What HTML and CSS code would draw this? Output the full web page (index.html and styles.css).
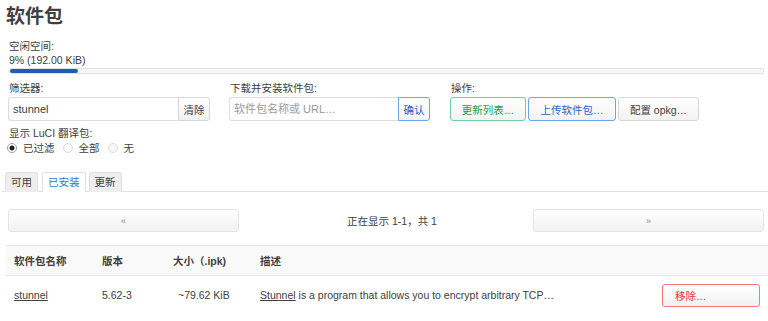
FILE: index.html
```html
<!DOCTYPE html>
<html lang="zh-cn">
<head>
    <meta charset="UTF-8">
    <title>软件包</title>
    <link rel="stylesheet" href="styles.css">
</head>
<body>
    <h2 class="titulo">软件包</h2>
    <div class="espaco">
        <div class="rotulo">空闲空间:</div>
        <div class="valor">9% (192.00 KiB)</div>
        <div class="barra"><div class="cheio" style="width: 9%"></div></div>
    </div>

    <div class="controles">
        <div class="grupo filtro">
            <div class="rotulo">筛选器:</div>
            <div class="campo">
                <input type="text" value="stunnel">
                <button class="btn">清除</button>
            </div>
        </div>
        <div class="grupo baixar">
            <div class="rotulo">下载并安装软件包:</div>
            <div class="campo">
                <input type="text" placeholder="软件包名称或 URL…">
                <button class="btn azul">确认</button>
            </div>
        </div>
        <div class="grupo acoes">
            <div class="rotulo">操作:</div>
            <div class="botoes">
                <button class="btn verde">更新列表…</button>
                <button class="btn azul">上传软件包…</button>
                <button class="btn">配置 opkg…</button>
            </div>
        </div>
    </div>

    <div class="traducao">
        <div class="rotulo">显示 LuCI 翻译包:</div>
        <div class="radios">
            <label><span class="radio marcado"></span>已过滤</label>
            <label><span class="radio"></span>全部</label>
            <label><span class="radio"></span>无</label>
        </div>
    </div>

    <ul class="abas">
        <li>可用</li>
        <li class="ativa">已安装</li>
        <li>更新</li>
    </ul>

    <div class="paginas">
        <button class="btn pag">«</button>
        <div class="info">正在显示 1-1，共 1</div>
        <button class="btn pag">»</button>
    </div>

    <table class="pacotes">
        <tr class="cabeca">
            <th class="c-nome">软件包名称</th>
            <th class="c-versao">版本</th>
            <th class="c-tam">大小（.ipk)</th>
            <th>描述</th>
            <th class="c-acao"></th>
        </tr>
        <tr>
            <td><a href="#">stunnel</a></td>
            <td>5.62-3</td>
            <td class="tam">~79.62 KiB</td>
            <td><a href="#">Stunnel</a> is a program that allows you to encrypt arbitrary TCP…</td>
            <td class="c-acao"><button class="btn vermelho">移除…</button></td>
        </tr>
    </table>
</body>
</html>
```

FILE: styles.css
```css
body
{
    margin: 0;
    padding: 0 4px 0 8px;
    font-family: "Liberation Sans", "Noto Sans CJK SC", sans-serif;
    font-size: 10.5px;
    color: #404040;
    background: #fff;
}
.titulo
{
    margin: 3px 0 0 -2px;
    font-size: 19px;
    line-height: 28px;
    font-weight: bold;
    color: #404040;
}
.espaco
{
    margin-top: 8px;
    padding-left: 1px;
}
.rotulo,
.valor
{
    line-height: 14px;
    white-space: nowrap;
}
.barra
{
    margin-top: 1px;
    height: 4px;
    border: 1px solid #e2e2e2;
    border-radius: 2px;
    background: #f7f7f7;
}
.cheio
{
    height: 4px;
    background: #1f5cb8;
    border-radius: 2px;
}
.controles
{
    display: flex;
    margin-top: 7px;
}
.grupo .rotulo
{
    padding-left: 1px;
    margin-bottom: 2px;
}
.filtro,
.baixar
{
    width: 221px;
}
.campo
{
    display: flex;
    height: 24px;
}
.campo input
{
    box-sizing: border-box;
    height: 24px;
    border: 1px solid #ddd;
    border-right: none;
    border-radius: 3px 0 0 3px;
    padding: 0 4px;
    font: inherit;
    font-size: 11px;
    color: #404040;
    outline: none;
}
.filtro input
{
    width: 170px;
}
.baixar input
{
    width: 169px;
}
.campo input::placeholder
{
    color: #999;
}
.btn
{
    box-sizing: border-box;
    height: 24px;
    border: 1px solid #d6d6d6;
    border-radius: 3px;
    background: linear-gradient(#fff, #f2f2f2);
    font: inherit;
    color: #404040;
    padding: 0;
    white-space: nowrap;
}
.campo .btn
{
    width: 32px;
    border-radius: 0 3px 3px 0;
}
.btn.azul
{
    border-color: #6aa6ec;
    color: #1f66c5;
}
.btn.verde
{
    border-color: #6fd09a;
    color: #1c9e53;
}
.btn.vermelho
{
    border-color: #f47a72;
    color: #e0392e;
}
.botoes
{
    display: flex;
    gap: 2px;
}
.botoes .btn:nth-child(1)
{
    width: 76px;
}
.botoes .btn:nth-child(2)
{
    width: 88px;
}
.botoes .btn:nth-child(3)
{
    width: 81px;
}
.traducao
{
    margin-top: 5px;
    padding-left: 1px;
}
.radios
{
    display: flex;
    gap: 8px;
    line-height: 16px;
    margin-left: -2px;
}
.radios label
{
    display: flex;
    align-items: center;
}
.radio
{
    box-sizing: border-box;
    width: 10px;
    height: 10px;
    margin-right: 6px;
    border: 1px solid #dcdcdc;
    border-radius: 50%;
    background: #f8f8f8;
}
.radio.marcado
{
    border: 1px solid #999;
    background: radial-gradient(circle, #222 0, #222 2.3px, #fff 2.8px);
}
.abas
{
    display: flex;
    gap: 3px;
    list-style: none;
    margin: 16px -4px 0 -6px;
    padding: 0 0 0 3px;
    height: 19px;
    border-bottom: 1px solid #e0e0e0;
}
.abas li
{
    box-sizing: border-box;
    height: 20px;
    padding: 0 5px;
    line-height: 19px;
    border: 1px solid #e0e0e0;
    border-bottom: none;
    border-radius: 3px 3px 0 0;
    background: #eee;
    color: #404040;
}
.abas li.ativa
{
    background: #fff;
    color: #2a7ad6;
    margin-left: 1px;
}
.paginas
{
    display: flex;
    align-items: center;
    justify-content: space-between;
    margin-top: 17px;
}
.btn.pag
{
    width: 231px;
    height: 23px;
    border-color: #e4e4e4;
    color: #888;
    font-size: 9px;
}
.info
{
    margin-left: 12px;
}
.pacotes
{
    width: calc(100% + 6px);
    margin: 13px 0 0 -2px;
    border-collapse: collapse;
}
.pacotes th,
.pacotes td
{
    text-align: left;
    padding: 0 0 0 8px;
    color: #404040;
    white-space: nowrap;
}
.cabeca
{
    background: #f9f9f9;
    border-top: 1px solid #e6e6e6;
    border-bottom: 1px solid #e6e6e6;
}
.cabeca th
{
    height: 29px;
    font-weight: bold;
}
.pacotes td
{
    height: 38px;
}
.c-nome
{
    width: 80px;
}
.c-versao
{
    width: 63px;
}
.c-tam
{
    width: 79px;
}
.pacotes td.tam
{
    padding-left: 13px;
}
.c-acao
{
    width: 106px;
}
.pacotes a
{
    color: #404040;
}
.btn.vermelho
{
    width: 98px;
    height: 23px;
    text-align: left;
    padding-left: 12px;
}
```
